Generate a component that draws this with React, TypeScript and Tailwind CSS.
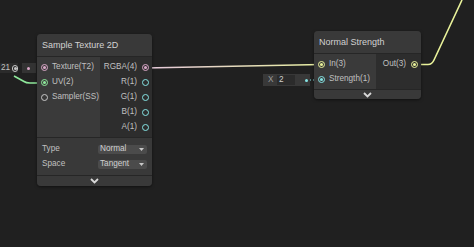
import React from 'react'

const font = { fontFamily: '"Liberation Sans", Arial, sans-serif' }

type PortProps = { color: string; filled?: boolean }

function Port({ color, filled }: PortProps) {
  return (
    <span
      className="flex h-[7px] w-[7px] shrink-0 items-center justify-center rounded-full border"
      style={{ borderColor: color }}
    >
      {filled && <span className="h-[3px] w-[3px] rounded-full" style={{ background: color }} />}
    </span>
  )
}

function InRow({ label, color, filled }: { label: string; color: string; filled?: boolean }) {
  return (
    <div className="flex h-[15px] items-center gap-[4px] whitespace-nowrap pl-[4px]">
      <Port color={color} filled={filled} />
      <span>{label}</span>
    </div>
  )
}

function OutRow({ label, color, filled }: { label: string; color: string; filled?: boolean }) {
  return (
    <div className="flex h-[15px] items-center justify-end gap-[5px] whitespace-nowrap pr-[3px]">
      <span>{label}</span>
      <Port color={color} filled={filled} />
    </div>
  )
}

function Chevron() {
  return (
    <svg width="9" height="6" viewBox="0 0 9 6">
      <path d="M1 1 L4.5 4.5 L8 1" fill="none" stroke="#d8d8d8" strokeWidth="1.8" />
    </svg>
  )
}

function Dropdown({ value }: { value: string }) {
  return (
    <div className="flex h-[9px] w-[49px] items-center justify-between rounded-[2px] bg-[#4b4b4b] pl-[2px] pr-[3px] text-[#d0d0d0]">
      <span className="leading-none">{value}</span>
      <svg width="5" height="3" viewBox="0 0 5 3">
        <path d="M0 0 H5 L2.5 3 Z" fill="#c8c8c8" />
      </svg>
    </div>
  )
}

const PINK = '#d9a7c7'
const GREEN = '#8ee89b'
const TEAL = '#86e4e4'
const YELLOW = '#e9f29a'
const GREY = '#c8c8c8'

export default function App() {
  return (
    <div className="relative h-[247px] w-[474px] overflow-hidden bg-[#202020] text-[8.2px] text-[#c0c0c0]" style={font}>
      {/* edges */}
      <svg className="absolute inset-0" width="474" height="247">
        <defs>
          <linearGradient id="rgbaEdge" x1="145" y1="0" x2="321" y2="0" gradientUnits="userSpaceOnUse">
            <stop offset="0" stopColor="#e6c8dc" />
            <stop offset="1" stopColor="#e6eda0" />
          </linearGradient>
        </defs>
        <path d="M145 68 L321 64.5" stroke="url(#rgbaEdge)" strokeWidth="1.6" fill="none" />
        <path d="M414 64.5 L428 64.5 Q432 64.5 434 60 L462 0" stroke={YELLOW} strokeWidth="1.6" fill="none" />
        <path d="M14 76 L24 81.5 Q26 83 30 83 L44 83" stroke={GREEN} strokeWidth="1.6" fill="none" />
        <path d="M30 68 L41 68" stroke={PINK} strokeWidth="1" strokeDasharray="2 2" fill="none" />
        <path d="M305 80 L318 80" stroke={TEAL} strokeWidth="1" strokeDasharray="2 2" fill="none" />
      </svg>

      {/* texture inline field (cut off at left) */}
      <div className="absolute left-0 top-[63px] flex h-[10px] w-[18px] items-center gap-[2px] bg-[#2b2b2b] pl-[1px]">
        <span className="leading-none">21</span>
        <span className="flex h-[7px] w-[7px] items-center justify-center rounded-full border border-[#c8c8c8]">
          <span className="h-[3px] w-[3px] rounded-full bg-[#c8c8c8]" />
        </span>
      </div>
      <div className="absolute left-[22px] top-[63px] flex h-[10px] w-[14px] items-center bg-[#333333] pl-[5px]">
        <span className="h-[3px] w-[3px] rounded-full bg-[#d9a7c7]" />
      </div>

      {/* Sample Texture 2D */}
      <div className="absolute left-[37px] top-[34px] w-[115px] overflow-hidden rounded-[4px] bg-[#2e2e2e] shadow-[0_1px_3px_rgba(0,0,0,0.5)]">
        <div className="flex h-[23px] items-center border-b border-[#262626] bg-[#393939] pl-[5px] pt-[1px] text-[9px] text-[#d2d2d2]">
          Sample Texture 2D
        </div>
        <div className="flex">
          <div className="w-[63px] bg-[#3a3a3a] pt-[3px]">
            <InRow label="Texture(T2)" color={PINK} filled />
            <InRow label="UV(2)" color={GREEN} filled />
            <InRow label="Sampler(SS)" color={GREY} />
          </div>
          <div className="flex-1 bg-[#2d2d2d] pb-[2px] pt-[3px]">
            <OutRow label="RGBA(4)" color={PINK} filled />
            <OutRow label="R(1)" color={TEAL} />
            <OutRow label="G(1)" color={TEAL} />
            <OutRow label="B(1)" color={TEAL} />
            <OutRow label="A(1)" color={TEAL} />
          </div>
        </div>
        <div className="border-t border-[#262626] bg-[#393939] px-[5px] pb-[3px] pt-[4px]">
          <div className="flex h-[15px] items-center justify-between">
            <span>Type</span>
            <Dropdown value="Normal" />
          </div>
          <div className="flex h-[15px] items-center justify-between">
            <span>Space</span>
            <Dropdown value="Tangent" />
          </div>
        </div>
        <div className="flex h-[11px] items-center justify-center border-t border-[#262626] bg-[#393939]">
          <Chevron />
        </div>
      </div>

      {/* inline strength field */}
      <div className="absolute left-[263px] top-[74px] flex h-[12px] w-[47px] items-center bg-[#383838]">
        <span className="w-[14px] pl-[5px] text-[#9a9a9a]">X</span>
        <span className="flex h-[10px] w-[18px] items-center bg-[#2b2b2b] pl-[2px] text-[#d0d0d0]">2</span>
        <span className="ml-[10px] h-[3px] w-[3px] rounded-full bg-[#86e4e4]" />
      </div>

      {/* Normal Strength */}
      <div className="absolute left-[314px] top-[31px] w-[107px] overflow-hidden rounded-[4px] bg-[#2e2e2e] shadow-[0_1px_3px_rgba(0,0,0,0.5)]">
        <div className="flex h-[23px] items-center border-b border-[#262626] bg-[#393939] pl-[5px] pt-[1px] text-[9px] text-[#d2d2d2]">
          Normal Strength
        </div>
        <div className="flex">
          <div className="w-[62px] bg-[#3a3a3a] pb-[2px] pt-[3px]">
            <InRow label="In(3)" color={YELLOW} filled />
            <InRow label="Strength(1)" color={TEAL} filled />
          </div>
          <div className="flex-1 bg-[#2d2d2d] pt-[3px]">
            <OutRow label="Out(3)" color={YELLOW} filled />
          </div>
        </div>
        <div className="flex h-[10px] items-center justify-center border-t border-[#262626] bg-[#393939]">
          <Chevron />
        </div>
      </div>
    </div>
  )
}
